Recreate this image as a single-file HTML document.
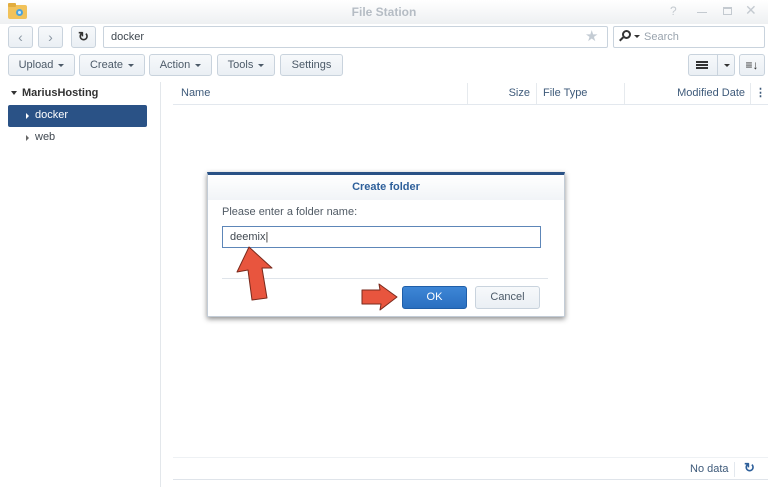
<!DOCTYPE html>
<html><head><style>
*{box-sizing:border-box;margin:0;padding:0}
body{width:768px;height:487px;position:relative;background:#fff;font-family:"Liberation Sans",sans-serif;font-size:11px;color:#505a64;overflow:hidden}
.a{position:absolute}
.btn{position:absolute;border:1px solid #c9d3dd;border-radius:3px;background:linear-gradient(#f7f9fb,#eaeff4);color:#4c5a68;font-size:11px;text-align:center;line-height:20px}
.car{display:inline-block;border-left:3px solid transparent;border-right:3px solid transparent;border-top:3px solid #4c5a68;vertical-align:middle;margin-left:5px}
.hd{position:absolute;top:82px;height:22px;line-height:22px;color:#3e5a7a;font-size:11px}
</style></head><body>
<div class="a" style="left:0;top:0;width:768px;height:24px;background:linear-gradient(#ffffff,#eef0f2)"></div>
<div class="a" style="left:8px;top:5px;width:19px;height:14px;background:#f1c25a;border-radius:2px"></div>
<div class="a" style="left:8px;top:3px;width:8px;height:4px;background:#e2ad3f;border-radius:1px"></div>
<div class="a" style="left:16px;top:9px;width:7px;height:7px;border:2px solid #4aa3dd;border-radius:50%;background:#cfe8f7"></div>
<div class="a" style="left:0;top:5px;width:768px;text-align:center;font-weight:bold;font-size:12px;color:#b5bcc4">File Station</div>
<div class="a" style="left:670px;top:4px;color:#c4cad0;font-size:12px">?</div>
<div class="a" style="left:697px;top:12px;width:10px;height:1px;background:#c4cad0"></div>
<div class="a" style="left:723px;top:7px;width:9px;height:8px;border:1px solid #c4cad0;border-top-width:2px"></div>
<div class="a" style="left:745px;top:2px;color:#c4cad0;font-size:14px">✕</div>

<div class="btn" style="left:8px;top:26px;width:25px;height:22px;color:#8a96a2;font-size:14px">‹</div>
<div class="btn" style="left:38px;top:26px;width:25px;height:22px;color:#8a96a2;font-size:14px">›</div>
<div class="btn" style="left:71px;top:26px;width:25px;height:22px;color:#333;font-weight:bold;font-size:13px">↻</div>
<div class="a" style="left:103px;top:26px;width:505px;height:22px;border:1px solid #c9d3dd;border-radius:2px;background:#fff;padding-left:7px;line-height:20px;color:#404850">docker</div>
<div class="a" style="left:585px;top:27px;color:#c4ccd4;font-size:15px">★</div>
<div class="a" style="left:613px;top:26px;width:152px;height:22px;border:1px solid #c9d3dd;border-radius:2px;background:#fff;line-height:20px;padding-left:30px;color:#9aa4ae">Search</div>
<div class="a" style="left:622px;top:30px;width:9px;height:9px;border:2px solid #333;border-radius:50%"></div>
<div class="a" style="left:619px;top:38px;width:5px;height:2px;background:#333;transform:rotate(-45deg)"></div>
<div class="a" style="left:634px;top:35px;border-left:3px solid transparent;border-right:3px solid transparent;border-top:3px solid #333"></div>

<div class="btn" style="left:8px;top:54px;width:67px;height:22px">Upload<span class="car"></span></div>
<div class="btn" style="left:79px;top:54px;width:66px;height:22px">Create<span class="car"></span></div>
<div class="btn" style="left:149px;top:54px;width:63px;height:22px">Action<span class="car"></span></div>
<div class="btn" style="left:217px;top:54px;width:58px;height:22px">Tools<span class="car"></span></div>
<div class="btn" style="left:280px;top:54px;width:63px;height:22px">Settings</div>
<div class="btn" style="left:688px;top:54px;width:47px;height:22px"></div>
<div class="a" style="left:696px;top:61px;width:12px;height:8px;border-top:2px solid #333;border-bottom:2px solid #333"></div>
<div class="a" style="left:696px;top:64px;width:12px;height:2px;background:#333"></div>
<div class="a" style="left:717px;top:55px;width:1px;height:20px;background:#c9d3dd"></div>
<div class="a" style="left:724px;top:64px;border-left:3px solid transparent;border-right:3px solid transparent;border-top:3px solid #333"></div>
<div class="btn" style="left:739px;top:54px;width:26px;height:22px;color:#333;font-weight:bold;font-size:12px">≡↓</div>

<div class="a" style="left:160px;top:82px;width:1px;height:405px;background:#e3e7eb"></div>
<div class="a" style="left:11px;top:91px;border-left:3px solid transparent;border-right:3px solid transparent;border-top:4px solid #333"></div>
<div class="a" style="left:22px;top:87px;font-weight:bold;color:#333">MariusHosting</div>
<div class="a" style="left:8px;top:105px;width:139px;height:22px;background:#2a5286;border-radius:2px"></div>
<div class="a" style="left:26px;top:113px;border-top:3px solid transparent;border-bottom:3px solid transparent;border-left:3px solid #fff"></div>
<div class="a" style="left:35px;top:109px;color:#fff">docker</div>
<div class="a" style="left:26px;top:135px;border-top:3px solid transparent;border-bottom:3px solid transparent;border-left:3px solid #666"></div>
<div class="a" style="left:35px;top:131px;color:#404850">web</div>

<div class="a" style="left:173px;top:104px;width:595px;height:1px;background:#e3e8ee"></div>
<div class="hd" style="left:181px">Name</div>
<div class="a" style="left:467px;top:83px;width:1px;height:21px;background:#e6eaee"></div>
<div class="hd" style="left:468px;width:62px;text-align:right">Size</div>
<div class="a" style="left:536px;top:83px;width:1px;height:21px;background:#e6eaee"></div>
<div class="hd" style="left:543px">File Type</div>
<div class="a" style="left:624px;top:83px;width:1px;height:21px;background:#e6eaee"></div>
<div class="hd" style="left:625px;width:120px;text-align:right">Modified Date</div>
<div class="a" style="left:750px;top:83px;width:1px;height:21px;background:#e6eaee"></div>
<div class="hd" style="left:755px;font-weight:bold">⋮</div>

<div class="a" style="left:173px;top:457px;width:595px;height:1px;background:#eef1f4"></div>
<div class="a" style="left:690px;top:463px;color:#3e5a7a">No data</div>
<div class="a" style="left:734px;top:462px;width:1px;height:15px;background:#e3e8ee"></div>
<div class="a" style="left:744px;top:460px;color:#2d5f9a;font-weight:bold;font-size:13px">↻</div>
<div class="a" style="left:173px;top:479px;width:595px;height:1px;background:#dfe4ea"></div>

<div class="a" style="left:207px;top:172px;width:358px;height:145px;background:#fff;border:1px solid #c3ccd6;border-top:3px solid #2a5286;box-shadow:0 2px 5px rgba(0,0,0,.45)"></div>
<div class="a" style="left:208px;top:175px;width:356px;height:25px;background:linear-gradient(#fff,#f1f4f7)"></div>
<div class="a" style="left:207px;top:181px;width:358px;text-align:center;font-weight:bold;color:#2d5f9a">Create folder</div>
<div class="a" style="left:222px;top:206px;color:#505a64">Please enter a folder name:</div>
<div class="a" style="left:222px;top:226px;width:319px;height:22px;border:1px solid #5d86b8;background:#fff;padding-left:7px;line-height:20px;color:#404850">deemix<span style="color:#333">|</span></div>
<div class="a" style="left:222px;top:278px;width:326px;height:1px;background:#dfe4ea"></div>
<div class="a" style="left:402px;top:286px;width:65px;height:23px;border:1px solid #1f5ea8;border-radius:3px;background:linear-gradient(#3d86d6,#2a6fc0);color:#fff;text-align:center;line-height:21px">OK</div>
<div class="btn" style="left:475px;top:286px;width:65px;height:23px;line-height:21px">Cancel</div>

<svg class="a" style="left:0;top:0" width="768" height="487">
<polygon points="249,247 272,268 262,268 267,298 252,300 248,270 237,272" fill="#e8553e" stroke="#7a2a1c" stroke-width="1" stroke-linejoin="round"/>
<polygon points="362,290 380,290 379,284 397,297 380,310 381,304 362,304" fill="#e8553e" stroke="#7a2a1c" stroke-width="1" stroke-linejoin="round"/>
</svg>
</body></html>
